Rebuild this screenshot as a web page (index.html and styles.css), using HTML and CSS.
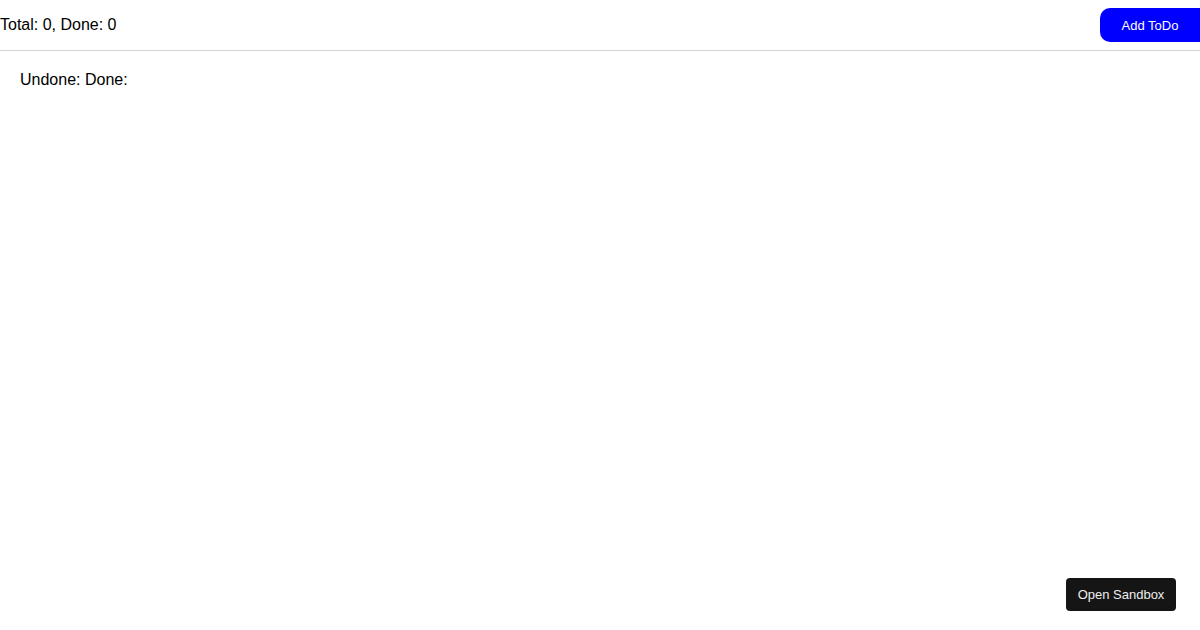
FILE: index.html
```html
<!DOCTYPE html>
<html lang="en">
<head>
    <meta charset="UTF-8">
    <meta name="viewport" content="width=device-width, initial-scale=1.0">
    <title>ToDo</title>
    <link rel="stylesheet" href="styles.css">
</head>
<body>
    <header class="top-bar">
        <span class="stats">Total: 0, Done: 0</span>
        <button class="add-btn">Add ToDo</button>
    </header>
    <main class="lists">
        <span>Undone:</span> <span>Done:</span>
    </main>
    <a class="sandbox-btn" href="#">Open Sandbox</a>
</body>
</html>
```

FILE: styles.css
```css
body { font-family: "Liberation Sans", Arial, sans-serif; margin: 0; padding: 0; background-color: #fff; color: #000; font-size: 16px; }
.top-bar { display: flex; justify-content: space-between; align-items: center; height: 50px; border-bottom: 1px solid #d4d4d4; }
.stats { line-height: 18px; }
.add-btn { background-color: #0000ff; color: #fff; border: none; border-radius: 10px 0 0 10px; width: 100px; height: 34px; font-family: "Liberation Sans", Arial, sans-serif; font-size: 13px; cursor: pointer; padding: 0; }
.lists { padding: 20px 20px; line-height: 18px; }
.sandbox-btn { position: fixed; right: 24px; bottom: 19px; width: 110px; height: 33px; display: flex; align-items: center; justify-content: center; background-color: #151515; color: #eee; font-size: 13px; border-radius: 4px; text-decoration: none; }
```
